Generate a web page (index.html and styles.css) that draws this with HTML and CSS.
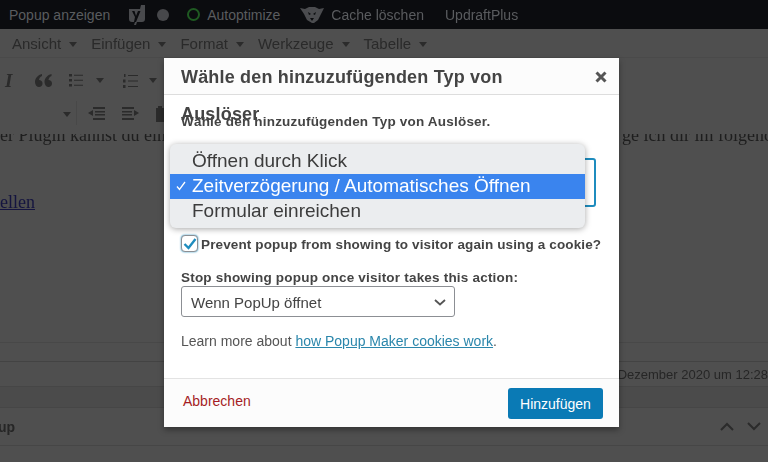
FILE: index.html
```html
<!DOCTYPE html>
<html lang="de">
<head>
<meta charset="utf-8">
<title>Popup Maker</title>
<link rel="stylesheet" href="styles.css">
</head>
<body>
<div class="page">
  <header class="adminbar">
    <span class="ab-item">Popup anzeigen</span>
    <svg class="yoast" width="18" height="22" viewBox="0 0 18 22"><path d="M1 5h11l1-4h4v14a3 3 0 0 1-3 3H9l-1 3H6l1-3H4a3 3 0 0 1-3-3z" fill="#494a4d"/><path d="M4 7h2.500L8 12l2-5h2.500L8 18H6l1-5z" fill="#0b0c0f"/></svg>
    <span class="dot"></span>
    <span class="ring"></span>
    <span class="ab-item auto">Autoptimize</span>
    <svg class="cheetah" width="24" height="18" viewBox="0 0 24 18"><path d="M0 2l5 1 4-2h6l4 2 5-1-3 6-3 6-4 3h-2l-5-3-3-6z" fill="#4b4c4f"/><path d="M8 6l3 2-2 1zM16 6l-3 2 2 1zM10 12h4l-2 3z" fill="#0b0c0f"/></svg>
    <span class="ab-item cache">Cache löschen</span>
    <span class="ab-item updraft">UpdraftPlus</span>
  </header>

  <nav class="menubar">
    <span class="menu">Ansicht<i class="caret"></i></span>
    <span class="menu">Einfügen<i class="caret"></i></span>
    <span class="menu">Format<i class="caret"></i></span>
    <span class="menu">Werkzeuge<i class="caret"></i></span>
    <span class="menu">Tabelle<i class="caret"></i></span>
  </nav>

  <div class="toolbar row1">
    <span class="italic">I</span>
    <svg class="quote" width="17" height="13" viewBox="0 0 17 13"><path d="M7 0v2C5 3 4 4.500 4 6c2 0 3.500 1.500 3.500 3.500S6 13 4 13 0 11 0 8c0-4 3-7 7-8zM16.500 0v2c-2 1-3 2.500-3 4 2 0 3.500 1.500 3.500 3.500S15.500 13 13.500 13s-4-2-4-5c0-4 3-7 7-8z" fill="#2b2b2b"/></svg>
    <svg class="list" width="14" height="13" viewBox="0 0 14 13"><path d="M0 0h3v2.500H0zM0 5h3v2.500H0zM0 10h3v2.500H0zM5 .7h9v1H5zM5 5.700h9v1H5zM5 10.700h9v1H5z" fill="#2b2b2b"/></svg>
    <i class="caret dark c1"></i>
    <svg class="list ol" width="15" height="14" viewBox="0 0 15 14"><path d="M1 0h1.500v3H1zM0 5.500h2.500v3H0zM0 11h2.500v3H0zM5 1h10v1H5zM5 6.500h10v1H5zM5 12h10v1H5z" fill="#2b2b2b"/></svg>
    <i class="caret dark c2"></i>
  </div>
  <div class="toolbar row2">
    <div class="format"><i class="caret dark"></i></div>
    <svg class="indent" width="17" height="15" viewBox="0 0 17 15"><path d="M5 1h12v2H5zM7 5h10v1.500H7zM7 8h10v1.500H7zM5 12h12v2H5zM5 4v6L0 7z" fill="#2b2b2b"/></svg>
    <svg class="indent next" width="17" height="15" viewBox="0 0 17 15"><path d="M0 1h12v2H0zM0 5h10v1.500H0zM0 8h10v1.500H0zM0 12h12v2H0zM12 4v6l5-3z" fill="#2b2b2b"/></svg>
    <svg class="clip" width="8" height="17" viewBox="0 0 8 17"><path d="M0 3h2V1h4v2h2v14H0z" fill="#2b2b2b"/></svg>
  </div>

  <main class="editor">
    <p class="line"><span>er Plugin kannst du ein Popup</span><span class="line-end">ge ich dir im folgenden</span></p>
    <p class="link-line"><a href="#">ellen</a></p>
  </main>

  <section class="footrows">
    <div class="frow r1"></div>
    <div class="frow r2"><span class="date">Dezember 2020 um 12:28</span></div>
    <div class="frow r3"></div>
    <div class="frow r4">
      <span class="box-title">up</span>
      <span class="arrows">
        <svg width="14" height="9" viewBox="0 0 14 9"><path d="M1 8l6-6 6 6" fill="none" stroke="#2b2b2b" stroke-width="2"/></svg>
        <svg width="14" height="9" viewBox="0 0 14 9"><path d="M1 1l6 6 6-6" fill="none" stroke="#2b2b2b" stroke-width="2"/></svg>
      </span>
    </div>
  </section>
</div>

<div class="modal">
  <div class="modal-head">
    <h1>Wähle den hinzuzufügenden Typ von Auslöser</h1>
    <svg class="close" width="12" height="12" viewBox="0 0 12 12"><path d="M1.500 1.500l9 9M10.500 1.500l-9 9" stroke="#555" stroke-width="3"/></svg>
  </div>
  <div class="modal-body">
    <p class="lead">Wähle den hinzuzufügenden Typ von Auslöser.</p>
    <div class="trigger-select"></div>
    <label class="check">
      <span class="checkbox"><svg width="14" height="12" viewBox="0 0 14 12"><path d="M1.500 6l4 4 7-9" fill="none" stroke="#1e8cbe" stroke-width="2.400"/></svg></span>
      <span class="check-text">Prevent popup from showing to visitor again using a cookie?</span>
    </label>
    <p class="stop">Stop showing popup once visitor takes this action:</p>
    <div class="select">
      <span>Wenn PopUp öffnet</span>
      <svg width="12" height="7" viewBox="0 0 12 7"><path d="M1 1l5 4.500L11 1" fill="none" stroke="#555" stroke-width="1.800"/></svg>
    </div>
    <p class="learn">Learn more about <a href="#">how Popup Maker cookies work</a>.</p>
  </div>
  <div class="modal-foot">
    <a class="cancel" href="#">Abbrechen</a>
    <button class="add" type="button">Hinzufügen</button>
  </div>
</div>

<ul class="dropdown">
  <li>Öffnen durch Klick</li>
  <li class="active"><svg class="tick" width="10" height="10" viewBox="0 0 10 10"><path d="M1 5.500l2.500 3L9 1" fill="none" stroke="#fff" stroke-width="1.300"/></svg>Zeitverzögerung / Automatisches Öffnen</li>
  <li>Formular einreichen</li>
</ul>
</body>
</html>
```
FILE: styles.css
```css
* { box-sizing: border-box; }
html, body { margin: 0; height: 100%; }
body {
  width: 768px;
  height: 462px;
  overflow: hidden;
  position: relative;
  background: #4f4f4f;
  font-family: "Liberation Sans", Arial, sans-serif;
}
.page { width: 768px; height: 462px; overflow: hidden; display: flex; flex-direction: column; filter: blur(.5px); }

.adminbar { height: 29px; flex: none; background: #0b0c0f; display: flex; align-items: center; padding-left: 9px; color: #5a5c5f; font-size: 14px; }
.ab-item { white-space: nowrap; }
.yoast { margin-left: 18px; }
.dot { width: 12px; height: 12px; border-radius: 50%; background: #47484b; margin-left: 11px; }
.ring { width: 13px; height: 13px; border-radius: 50%; border: 2.500px solid #1f5a22; margin-left: 18px; }
.auto { margin-left: 7px; }
.cheetah { margin-left: 20px; }
.cache { margin-left: 7px; }
.updraft { margin-left: 21px; }

.menubar { height: 29px; flex: none; display: flex; align-items: center; padding-left: 12px; gap: 14px; color: #2a2a2a; font-size: 15px; border-bottom: 1px solid #4a4a4a; }
.menu { display: flex; align-items: center; white-space: nowrap; }
.caret { display: inline-block; width: 0; height: 0; border-left: 4px solid transparent; border-right: 4px solid transparent; border-top: 5px solid #2b2b2b; margin-left: 8px; margin-top: 2px; }

.toolbar { flex: none; display: flex; align-items: center; }
.row1 { height: 37px; margin-top: 4px; color: #2b2b2b; }
.row2 { height: 39px; padding-bottom: 3px; margin-top: -4px; }
.italic { font: italic bold 19px "Liberation Serif", serif; margin-left: 5px; width: 12px; }
.quote { margin-left: 18px; }
.list { margin-left: 17px; }
.row1 .c1 { margin-left: 13px; margin-top: 0; }
.list.ol { margin-left: 19px; }
.row1 .c2 { margin-left: 11px; margin-top: 0; }
.format { width: 77px; height: 24px; border-right: 1px solid #484848; display: flex; align-items: center; justify-content: flex-end; padding-right: 5px; }
.indent { margin-left: 11px; }
.indent.next { margin-left: 17px; }
.clip { margin-left: 17px; }

.editor { flex: 1; font: 18px/22px "Liberation Serif", serif; color: #1e1e1e; overflow: hidden; min-height: 0; }
.line { margin: -10px 0 0; white-space: nowrap; display: flex; justify-content: space-between; }
.line-end { margin-right: -22px; }
.link-line { margin: 45px 0 0; }
.link-line a { color: #14143f; }

.footrows { flex: none; height: 120px; }
.frow { border-top: 1px solid #484848; }
.r1 { height: 19px; }
.r2 { height: 25px; border-top-color: #434343; font-size: 13px; color: #262626; display: flex; align-items: center; justify-content: flex-end; white-space: nowrap; }
.r3 { height: 21px; background: #4b4b4b; border-top-color: #464646; }
.r4 { height: 39px; border-top-color: #464646; border-bottom: 1px solid #464646; display: flex; align-items: center; justify-content: space-between; padding-right: 7px; }
.box-title { font-weight: bold; font-size: 14px; color: #262626; margin-left: -2px; padding-top: 1px; }
.arrows { display: flex; gap: 13px; }

.modal { position: absolute; left: 164px; top: 58px; width: 455px; height: 369px; background: #fff; color: #444; display: flex; flex-direction: column; box-shadow: 0 3px 6px rgba(0,0,0,.35); filter: blur(.35px); }
.modal-head { height: 37px; flex: none; background: #fcfcfc; border-bottom: 1px solid #ddd; position: relative; }
.modal-head h1 { position: absolute; left: 17px; top: 1px; width: 400px; margin: 0; font-size: 18px; line-height: 37px; font-weight: bold; color: #444; letter-spacing: .01em; }
.close { position: absolute; right: 12px; top: 13px; }
.modal-body { flex: 1; padding: 0 17px; font-size: 13.500px; position: relative; }
.lead { margin: 19px 0 0; font-weight: bold; line-height: 16px; letter-spacing: .015em; position: relative; }
.trigger-select { position: absolute; left: 17px; top: 63px; right: 23px; height: 49px; border: 2px solid #1e8cbe; border-radius: 3px; }
.check { display: flex; align-items: flex-start; gap: 3px; margin-top: 105px; font-weight: bold; line-height: 16px; letter-spacing: .01em; white-space: nowrap; }
.check-text { padding-top: 2px; }
.checkbox { width: 17px; height: 17px; border: 1.500px solid #8c8f94; border-radius: 4px; background: #fff; display: flex; align-items: center; justify-content: center; flex: none; box-shadow: 0 0 2px #1e8cbe; }
.stop { margin: 17px 0 0; font-weight: bold; line-height: 16px; letter-spacing: .015em; }
.select { margin-top: 0; width: 274px; height: 31px; border: 1px solid #8c8f94; border-radius: 3px; display: flex; align-items: center; justify-content: space-between; padding: 1px 8px 0 9px; font-size: 15px; color: #444; }
.learn { margin: 15px 0 0; font-size: 14px; line-height: 18px; color: #555; }
.learn a { color: #2a86ab; }
.modal-foot { height: 49px; flex: none; background: #fcfcfc; border-top: 1px solid #e3e3e3; display: flex; align-items: center; justify-content: space-between; padding: 0 16px 0 19px; }
.cancel { color: #a51c24; font-size: 14px; text-decoration: none; margin-top: -5px; }
.add { width: 95px; height: 31px; background: #0a7ab5; color: #fff; border: 0; border-radius: 3px; font: 14px "Liberation Sans", Arial, sans-serif; margin-top: 1px; }

.dropdown { position: absolute; left: 170px; top: 144px; width: 415px; height: 84px; margin: 0; padding: 5px 0 0; list-style: none; background: #ebedef; border-radius: 6px; box-shadow: 0 1px 6px rgba(0,0,0,.35); font-size: 19px; color: #3c3c3c; filter: blur(.3px); }
.dropdown li { height: 25px; line-height: 23px; padding-left: 22px; white-space: nowrap; position: relative; }
.dropdown .active { background: #3a84ee; color: #fff; }
.tick { position: absolute; left: 6px; top: 7px; }
```
